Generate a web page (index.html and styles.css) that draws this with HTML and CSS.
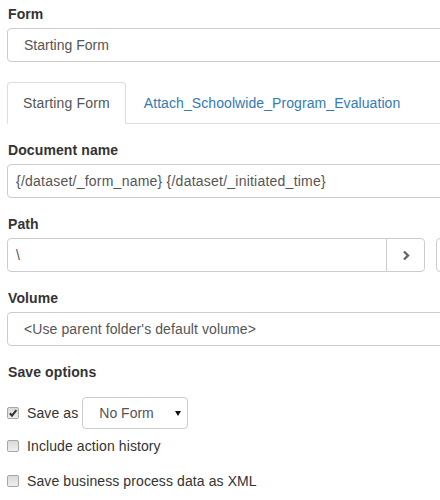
FILE: index.html
```html
<!DOCTYPE html>
<html>
<head>
<meta charset="utf-8">
<link rel="stylesheet" href="styles.css">
</head>
<body>
<div class="page">
  <div class="group">
    <div class="label">Form</div>
    <div class="field pad-wide">Starting Form</div>
  </div>
  <ul class="tabs">
    <li class="tab active">Starting Form</li>
    <li class="tab"><a class="tab-link">Attach_Schoolwide_Program_Evaluation</a></li>
  </ul>
  <div class="tab-content">
    <div class="group">
      <div class="label">Document name</div>
      <div class="field pad-narrow doc-name">{/dataset/_form_name} {/dataset/_initiated_time}</div>
    </div>
    <div class="group">
      <div class="label">Path</div>
      <div class="path-row">
        <div class="input-group">
          <div class="field pad-narrow path-input">\</div>
          <div class="addon-btn">
            <svg width="8" height="11" viewBox="0 0 8 11"><path d="M2 1.5 L6 5.5 L2 9.5" fill="none" stroke="#666" stroke-width="2.4"/></svg>
          </div>
        </div>
        <div class="extra-btn"></div>
      </div>
    </div>
    <div class="group">
      <div class="label">Volume</div>
      <div class="field pad-wide volume">&lt;Use parent folder's default volume&gt;</div>
    </div>
    <div class="label">Save options</div>
    <div class="options">
      <div class="check-row row-first">
        <span class="checkbox checked">
          <svg width="10" height="10" viewBox="0 0 10 10"><path d="M1.8 5.2 L4 7.6 L8.4 2.2" fill="none" stroke="#333" stroke-width="2"/></svg>
        </span>
        <span class="check-text">Save as</span>
        <div class="mini-select">No Form<span class="caret"></span></div>
      </div>
      <div class="check-row row-second">
        <span class="checkbox"></span>
        <span class="check-text">Include action history</span>
      </div>
      <div class="check-row row-third">
        <span class="checkbox"></span>
        <span class="check-text">Save business process data as XML</span>
      </div>
    </div>
  </div>
</div>
</body>
</html>
```

FILE: styles.css
```css
html, body {
  margin: 0;
  padding: 0;
  overflow: hidden;
  background: #fff;
}
body {
  font-family: "Liberation Sans", Arial, sans-serif;
  font-size: 14px;
  line-height: 20px;
  color: #333;
}
.page {
  width: 520px;
  padding: 4px 0 0 7px;
}
.label {
  font-weight: bold;
  margin-bottom: 4px;
  padding-left: 1px;
  letter-spacing: 0.1px;
}
.group {
  margin-bottom: 16px;
}
.field {
  height: 34px;
  box-sizing: border-box;
  border: 1px solid #ccc;
  border-radius: 4px;
  display: flex;
  align-items: center;
  color: #555;
  white-space: nowrap;
  background: #fff;
}
.pad-wide {
  padding: 0 16px;
}
.pad-narrow {
  padding: 0 8px;
}
.doc-name {
  letter-spacing: 0.23px;
}
.volume {
  letter-spacing: 0.1px;
}
.tabs {
  display: flex;
  margin: 20px 0 0;
  padding: 0;
  list-style: none;
  border-bottom: 1px solid #ddd;
}
.tab {
  padding: 10px 15px;
  border: 1px solid transparent;
  border-radius: 4px 4px 0 0;
  margin-right: 2px;
  margin-bottom: -1px;
  white-space: nowrap;
}
.tab.active {
  border-color: #ddd;
  border-bottom-color: #fff;
  background: #fff;
  color: #555;
  letter-spacing: 0.15px;
}
.tab-link {
  color: #337ab7;
  letter-spacing: 0.08px;
}
.tab-content {
  padding-top: 16px;
}
.path-row {
  display: flex;
}
.input-group {
  display: flex;
}
.path-input {
  width: 380px;
  border-radius: 4px 0 0 4px;
}
.addon-btn {
  width: 39px;
  height: 34px;
  box-sizing: border-box;
  margin-left: -1px;
  border: 1px solid #ccc;
  border-radius: 0 4px 4px 0;
  display: flex;
  align-items: center;
  justify-content: center;
  background: #fff;
}
.extra-btn {
  width: 40px;
  height: 34px;
  box-sizing: border-box;
  margin-left: 11px;
  border: 1px solid #ccc;
  border-radius: 4px 0 0 4px;
}
.options {
  padding-top: 11px;
}
.check-row {
  display: flex;
  align-items: center;
}
.check-text {
  letter-spacing: 0.1px;
}
.row-first {
  height: 32px;
}
.row-second {
  height: 20px;
  margin-top: 7px;
}
.row-third {
  height: 20px;
  margin-top: 15px;
}
.checkbox {
  width: 12px;
  height: 12px;
  box-sizing: border-box;
  border: 1px solid #a6a6a6;
  border-radius: 2px;
  background: linear-gradient(#d9d9d9, #efefef);
  margin-right: 8px;
  display: flex;
  align-items: center;
  justify-content: center;
  flex: none;
}
.mini-select {
  width: 106px;
  height: 32px;
  box-sizing: border-box;
  margin-left: 4px;
  border: 1px solid #ccc;
  border-radius: 4px;
  padding: 0 6px 0 16px;
  display: flex;
  align-items: center;
  justify-content: space-between;
  color: #555;
}
.caret {
  width: 0;
  height: 0;
  border-left: 3px solid transparent;
  border-right: 3px solid transparent;
  border-top: 5px solid #111;
}
```
